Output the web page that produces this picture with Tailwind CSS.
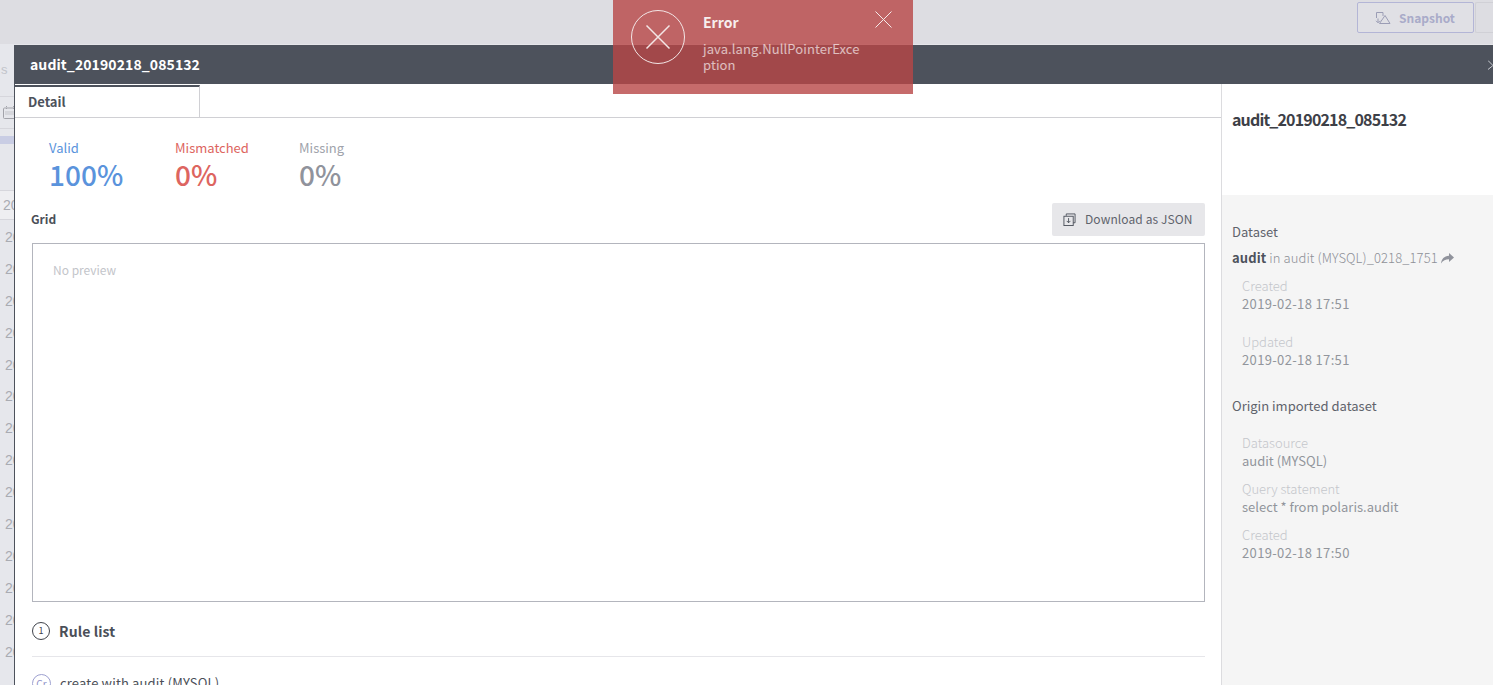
<!DOCTYPE html>
<html lang="en">
<head>
    <meta charset="UTF-8">
    <title>Audit detail</title>
    <script src="https://cdn.jsdelivr.net/npm/@tailwindcss/browser@4"></script>
</head>
<body class="relative w-[1493px] h-[685px] overflow-hidden bg-[#e6e6ea] font-['Noto_Sans_CJK_KR','Noto_Sans',sans-serif]">
    <!-- Page behind the modal -->
    <div class="flex items-start justify-end h-[44px] bg-[#dddde2] pt-[2px]">
        <button class="flex items-center justify-center gap-[8px] w-[117px] h-[31px] pr-[2px] border border-[#b3b5d6] rounded-[2px] bg-[#e0e0e5] text-[12px] font-bold text-[#a9abc9]">
            <svg width="17" height="14" viewBox="0 0 17 14" fill="none" stroke="#9b9db5" stroke-width="1"><path d="M2.500 7V1.500H9V5"/><path d="M5.500 12.500L11 4.500L16 12.500Z"/><path d="M4 7.500V11.500M2 9.800L4 11.800L6 9.800"/></svg>
            Snapshot
        </button>
        <div class="w-[18px] h-[31px] border border-[#d0d0d6] border-r-0 ml-[1px] rounded-l-[2px]"></div>
    </div>
    <div class="w-[14px] h-[641px] overflow-hidden bg-[#e6e7ec] text-[#a9abb2] text-[14px] font-['Liberation_Sans',sans-serif]">
        <div class="h-[53px] pt-[14px] text-[13px] leading-[24px] pl-[1px] text-[#c2c4ca] border-b border-[#d6d6dc]">s</div>
        <div class="h-[32px] pt-[9px] pl-[3px] border-b border-[#d6d6dc]">
            <svg width="14" height="13" viewBox="0 0 14 13" fill="none" stroke="#a2a3aa"><rect x="0.500" y="2" width="13" height="10.500" rx="1"/><path d="M3.500 0V3M10.500 0V3M2.500 6H11.500M2.500 8H11.500" stroke-dasharray="1 1"/></svg>
        </div>
        <div class="h-[8px] mt-[7px] bg-[#c9cde4]"></div>
        <div class="h-[46px]"></div>
        <div class="h-[30px] pl-[3px] leading-[29px] border-y border-[#d6d6dc] bg-[#eeeef1]">20</div>
        <div class="pl-[5px] pt-[1px] leading-[32px]">
            <div class="h-[31.9px]">20</div><div class="h-[31.9px]">20</div><div class="h-[31.9px]">20</div><div class="h-[31.9px]">20</div><div class="h-[31.9px]">20</div><div class="h-[31.9px]">20</div><div class="h-[31.9px]">20</div><div class="h-[31.9px]">20</div><div class="h-[31.9px]">20</div><div class="h-[31.9px]">20</div><div class="h-[31.9px]">20</div><div class="h-[31.9px]">20</div><div class="h-[31.9px]">20</div><div class="h-[31.9px]">20</div>
        </div>
    </div>

    <!-- Modal -->
    <div class="absolute left-[14px] top-[45px] w-[1479px] h-[640px] flex flex-col bg-white border-l border-[#4d525c]">
        <div class="flex items-center justify-between h-[39px] shrink-0 bg-[#4d525c] pl-[15px] pr-0 text-white">
            <span class="text-[14px] font-bold tracking-[0.1px]">audit_20190218_085132</span>
            <svg width="5" height="10" viewBox="0 0 5 10" fill="none" stroke="#c8cad0"><path d="M0 0.500L5 5.500M0 9.500L5 5.500"/></svg>
        </div>
        <div class="flex flex-1 min-h-0">
            <div class="w-[1206px] shrink-0">
                <div class="h-[34px] pt-[1px] border-b border-[#d0d0d4]">
                    <div class="w-[185px] h-[32px] pl-[13px] bg-white border-t-[2px] border-t-[#4d525c] border-r border-r-[#d0d0d4] text-[13px] font-bold leading-[30px] text-[#4d525c]">Detail</div>
                </div>
                <div class="flex pl-[34px] pt-[20px] h-[85px]">
                    <div class="w-[126px]">
                        <p class="text-[13px] leading-[20px] text-[#5a93dc]">Valid</p>
                        <p class="text-[28px] leading-[32px] font-medium text-[#5a93dc]">100%</p>
                    </div>
                    <div class="w-[124px]">
                        <p class="text-[13px] leading-[20px] text-[#dd6560]">Mismatched</p>
                        <p class="text-[28px] leading-[32px] font-medium text-[#dd6560]">0%</p>
                    </div>
                    <div>
                        <p class="text-[13px] leading-[20px] text-[#a0a3ab]">Missing</p>
                        <p class="text-[28px] leading-[32px] font-medium text-[#90939c]">0%</p>
                    </div>
                </div>
                <div class="px-[17px]">
                    <div class="flex items-center justify-between h-[33px] w-[1173px]">
                        <span class="-ml-[1px] text-[12px] font-bold text-[#4b4f58] pb-[2px]">Grid</span>
                        <button class="flex items-center gap-[9px] w-[153px] h-[33px] pl-[11px] pb-[1px] rounded-[2px] bg-[#e7e7ea] text-[12px] tracking-[0.1px] text-[#5f636c]">
                            <svg width="13" height="13" viewBox="0 0 14 14" fill="none" stroke="#4d525c"><path d="M3.500 3V1H13V10.500H11"/><rect x="1" y="3.500" width="10" height="10"/><path d="M6 5.500V10.500M4 8.500L6 10.500L8 8.500"/></svg>
                            Download as JSON
                        </button>
                    </div>
                    <div class="w-[1173px] h-[359px] mt-[7px] border border-[#b3b5bd] pl-[20px] pt-[16px] text-[12px] leading-[20px] text-[#c3c5ca]">No preview</div>
                    <div class="flex items-center w-[1173px] h-[55px] border-b border-[#e6e6ea] pt-[4px]">
                        <span class="flex items-center justify-center w-[18px] h-[18px] border border-[#3f434b] rounded-full text-[9px] text-[#3f434b]">1</span>
                        <span class="ml-[9px] text-[14px] font-bold tracking-[0.1px] text-[#4b4f58]">Rule list</span>
                    </div>
                    <div class="flex items-center h-[20px] mt-[16px]">
                        <span class="flex items-center justify-center w-[19px] h-[19px] border border-[#9da0d0] rounded-full text-[10px] text-[#8f92c8]">Cr</span>
                        <span class="ml-[9px] text-[13px] tracking-[0.16px] text-[#4b4f58]">create with audit (MYSQL)</span>
                    </div>
                </div>
            </div>
            <!-- Side panel -->
            <div class="flex-1 border-l border-[#dcdcdf] flex flex-col">
                <div class="h-[111px] shrink-0 bg-white pl-[10px] pt-[24px]">
                    <p class="text-[16px] leading-[22px] font-bold tracking-[-0.85px] text-[#3d4047]">audit_20190218_085132</p>
                </div>
                <div class="flex-1 bg-[#f5f5f5] pl-[10px] pt-[27px] text-[13px] leading-[20px]">
                    <p class="text-[#5f636c]">Dataset</p>
                    <p class="flex items-center mt-[6px] font-light tracking-[0.1px] text-[#8d9097]">
                        <b class="font-bold text-[#4d525c] mr-[3px]">audit</b>in audit (MYSQL)_0218_1751
                        <svg class="ml-[3px]" width="13" height="11" viewBox="0 0 13 11" fill="#90939c"><path d="M8 0L13 4.500L8 9V6.300C4.500 6.300 2 7.500 0 10.500C0.500 6 3 3 8 2.700Z"/></svg>
                    </p>
                    <div class="pl-[10px] mt-[8px]">
                        <p class="font-light text-[#c4c6cb]">Created</p>
                        <p class="mt-[-2px] tracking-[0.35px] text-[#92959c]">2019-02-18 17:51</p>
                        <p class="mt-[18px] font-light text-[#c4c6cb]">Updated</p>
                        <p class="mt-[-2px] tracking-[0.35px] text-[#92959c]">2019-02-18 17:51</p>
                    </div>
                    <p class="mt-[26px] text-[#5f636c]">Origin imported dataset</p>
                    <div class="pl-[10px] mt-[17px]">
                        <p class="font-light text-[#c4c6cb]">Datasource</p>
                        <p class="mt-[-2px] text-[#92959c]">audit (MYSQL)</p>
                        <p class="mt-[8px] font-light text-[#c4c6cb]">Query statement</p>
                        <p class="mt-[-2px] text-[#92959c]">select * from polaris.audit</p>
                        <p class="mt-[8px] font-light text-[#c4c6cb]">Created</p>
                        <p class="mt-[-2px] tracking-[0.35px] text-[#92959c]">2019-02-18 17:50</p>
                    </div>
                </div>
            </div>
        </div>
    </div>

    <!-- Error toast -->
    <div class="absolute left-[613px] top-0 w-[300px] h-[94px] bg-[#b84646]/80 text-white">
        <svg class="absolute left-[18px] top-[10px]" width="54" height="54" viewBox="0 0 54 54" fill="none" stroke="#f3e6e6"><circle cx="27" cy="27" r="26.500"/><path d="M15.500 15.500L38.500 38.500M38.500 15.500L15.500 38.500" stroke-width="1.500"/></svg>
        <svg class="absolute left-[262px] top-[11px]" width="17" height="17" viewBox="0 0 17 17" fill="none" stroke="#f6eaea"><path d="M0.500 0.500L16.500 16.500M16.500 0.500L0.500 16.500"/></svg>
        <div class="pl-[90px] pt-[12px] w-[250px]">
            <p class="text-[14px] leading-[20px] font-bold text-[#f7eeee]">Error</p>
            <p class="mt-[9px] text-[13px] leading-[16px] tracking-[0.1px] break-all text-white/65">java.lang.NullPointerException</p>
        </div>
    </div>
</body>
</html>
